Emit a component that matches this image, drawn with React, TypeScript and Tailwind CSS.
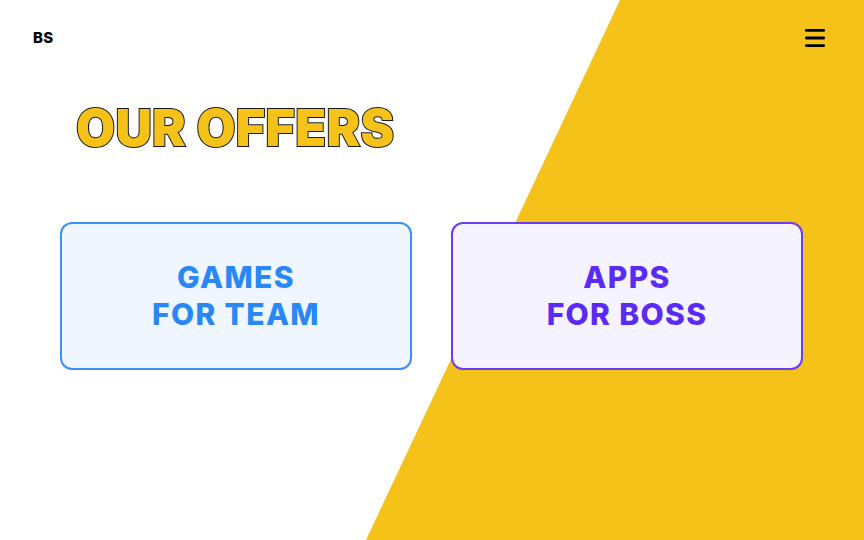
import { Menu } from "lucide-react"

function OfferCard({ lines, tone }: { lines: string[]; tone: "blue" | "violet" }) {
  const cls =
    tone === "blue"
      ? "border-[#3b8ff5] bg-[#eff6ff] text-[#2a88f5]"
      : "border-[#6a3cf5] bg-[#f5f3ff] text-[#5a2bf5]"
  return (
    <div
      className={`flex h-[148px] w-[352px] flex-col items-center justify-center rounded-xl border-2 ${cls}`}>
      {lines.map((l) => (
        <span key={l} className="text-[30px] font-extrabold leading-[37px] tracking-[0.045em]">
          {l}
        </span>
      ))}
    </div>
  )
}

export default function App() {
  return (
    <div
      className="relative h-[540px] w-[864px] overflow-hidden bg-white"
      style={{ fontFamily: "Inter, 'Liberation Sans', sans-serif" }}>
      <div className="absolute inset-0 bg-[#f5c21a] [clip-path:polygon(620px_0,864px_0,864px_540px,366px_540px)]" />

      <div className="relative flex h-full flex-col">
        <header className="flex items-center justify-between pl-[33px] pr-[36px] pt-[25px]">
          <span className="text-[15px] font-extrabold tracking-[0.02em] text-black">BS</span>
          <Menu size={26} strokeWidth={2.6} className="text-black" />
        </header>

        <h1
          className="ml-[76px] mt-[52px] text-[50.5px] font-black leading-none tracking-[0.005em] text-[#f5c21a]"
          style={{ WebkitTextStroke: "2px #1a1a1a", paintOrder: "stroke fill" }}>
          OUR OFFERS
        </h1>

        <div className="ml-[60px] mt-[68px] flex gap-[39px]">
          <OfferCard tone="blue" lines={["GAMES", "FOR TEAM"]} />
          <OfferCard tone="violet" lines={["APPS", "FOR BOSS"]} />
        </div>
      </div>
    </div>
  )
}
